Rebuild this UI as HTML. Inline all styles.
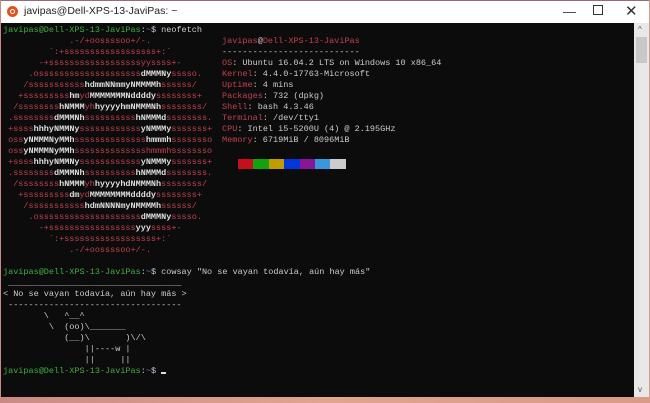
<!DOCTYPE html>
<html><head><meta charset="utf-8"><style>
html,body{margin:0;padding:0;width:650px;height:403px;overflow:hidden;background:linear-gradient(90deg,#c98a86,#e0a48f 50%,#d99a88);}
.win{position:absolute;left:1px;top:0;width:648px;height:397px;background:#0c0c0c;border-top:1px solid #9a6a7a;box-sizing:border-box;}
.title{position:absolute;left:0;top:0;width:648px;height:22px;background:#fff;font-family:"Liberation Sans",sans-serif;font-size:10.5px;color:#222;}
.title .t{position:absolute;left:23px;top:4px;}
.ico{position:absolute;left:6px;top:5px;width:11px;height:11px;border-radius:50%;background:#e2541f;}
.ico:after{content:"";position:absolute;left:3px;top:3px;width:3px;height:3px;border:1px solid #fff;border-radius:50%;}
.ctl{position:absolute;top:3px;font-family:"Liberation Sans",sans-serif;color:#333;font-size:13px;}
pre{margin:0;font-family:"Liberation Mono",monospace;font-size:8.5px;line-height:11px;color:#cccccc;position:absolute;white-space:pre;}
.g{color:#3fae3f}.b{color:#4a8fe0}.r{color:#c3404f}.w{color:#dedede;font-weight:bold}
.sb{position:absolute;left:633px;top:22px;width:15px;height:374px;background:#e8e8e8;}
.thumb{position:absolute;left:2px;top:14px;width:11px;height:26px;background:#c8c8c8;}
.blk{position:absolute;top:158px;height:10px;width:15.4px;}
</style></head><body>
<div class="win">
<div class="title"><div class="ico"></div><span class="t">javipas@Dell-XPS-13-JaviPas: ~</span>
<span class="ctl" style="left:562px;">&#8212;</span>
<span class="ctl" style="left:592px;top:2px;"><span style="display:inline-block;width:8px;height:8px;border:1px solid #333;"></span></span>
<span class="ctl" style="left:624px;top:1px;font-size:15px;">&#10005;</span>
</div>
<pre style="left:2px;top:24px;"><span class="g">javipas@Dell-XPS-13-JaviPas</span>:<span class="b">~</span>$ neofetch
<span class="r">             .-/+oossssoo+/-.
         `:+ssssssssssssssssss+:`
       -+ssssssssssssssssssyyssss+-
     .ossssssssssssssssssss<span class="w">dMMMNy</span>sssso.
    /sssssssssss<span class="w">hdmmNNmmyNMMMMh</span>ssssss/
   +sssssssss<span class="w">hm</span>yd<span class="w">MMMMMMMNddddy</span>ssssssss+
  /ssssssss<span class="w">hNMMM</span>yh<span class="w">hyyyyhmNMMMNh</span>ssssssss/
 .ssssssss<span class="w">dMMMNh</span>ssssssssss<span class="w">hNMMMd</span>ssssssss.
 +ssss<span class="w">hhhyNMMNy</span>ssssssssssss<span class="w">yNMMMy</span>sssssss+
 oss<span class="w">yNMMMNyMMh</span>ssssssssssssss<span class="w">hmmmh</span>ssssssso
 oss<span class="w">yNMMMNyMMh</span>sssssssssssssshmmmhssssssso
 +ssss<span class="w">hhhyNMMNy</span>ssssssssssss<span class="w">yNMMMy</span>sssssss+
 .ssssssss<span class="w">dMMMNh</span>ssssssssss<span class="w">hNMMMd</span>ssssssss.
  /ssssssss<span class="w">hNMMM</span>yh<span class="w">hyyyyhdNMMMNh</span>ssssssss/
   +sssssssss<span class="w">dm</span>yd<span class="w">MMMMMMMMddddy</span>ssssssss+
    /sssssssssss<span class="w">hdmNNNNmyNMMMMh</span>ssssss/
     .ossssssssssssssssssss<span class="w">dMMMNy</span>sssso.
       -+sssssssssssssssss<span class="w">yyy</span>ssss+-
         `:+ssssssssssssssssss+:`
             .-/+oossssoo+/-.</span>

<span class="g">javipas@Dell-XPS-13-JaviPas</span>:<span class="b">~</span>$ cowsay "No se vayan todavía, aún hay más"
 __________________________________
&lt; No se vayan todavía, aún hay más &gt;
 ----------------------------------
        \   ^__^
         \  (oo)\_______
            (__)\       )\/\
                ||----w |
                ||     ||
<span class="g">javipas@Dell-XPS-13-JaviPas</span>:<span class="b">~</span>$ <span style="display:inline-block;width:5px;height:2px;background:#ddd;vertical-align:-1px;"></span></pre>
<pre style="left:221px;top:35px;"><span class="r">javipas</span>@<span class="r">Dell-XPS-13-JaviPas</span>
---------------------------
<span class="r">OS</span>: Ubuntu 16.04.2 LTS on Windows 10 x86_64
<span class="r">Kernel</span>: 4.4.0-17763-Microsoft
<span class="r">Uptime</span>: 4 mins
<span class="r">Packages</span>: 732 (dpkg)
<span class="r">Shell</span>: bash 4.3.46
<span class="r">Terminal</span>: /dev/tty1
<span class="r">CPU</span>: Intel i5-5200U (4) @ 2.195GHz
<span class="r">Memory</span>: 6719MiB / 8096MiB</pre>
<div class="blk" style="left:237px;background:#c50f1f"></div>
<div class="blk" style="left:252.4px;background:#13a10e"></div>
<div class="blk" style="left:267.8px;background:#c19c00"></div>
<div class="blk" style="left:283.2px;background:#0037da"></div>
<div class="blk" style="left:298.6px;background:#881798"></div>
<div class="blk" style="left:314px;background:#3a96dd"></div>
<div class="blk" style="left:329.4px;background:#cccccc"></div>
<div class="sb"><div style="position:absolute;left:4px;top:2px;font:8px 'Liberation Sans',sans-serif;color:#555;">&#94;</div><div class="thumb"></div><div style="position:absolute;left:4px;top:362px;font:8px 'Liberation Sans',sans-serif;color:#555;">v</div></div>
</div>
</body></html>
